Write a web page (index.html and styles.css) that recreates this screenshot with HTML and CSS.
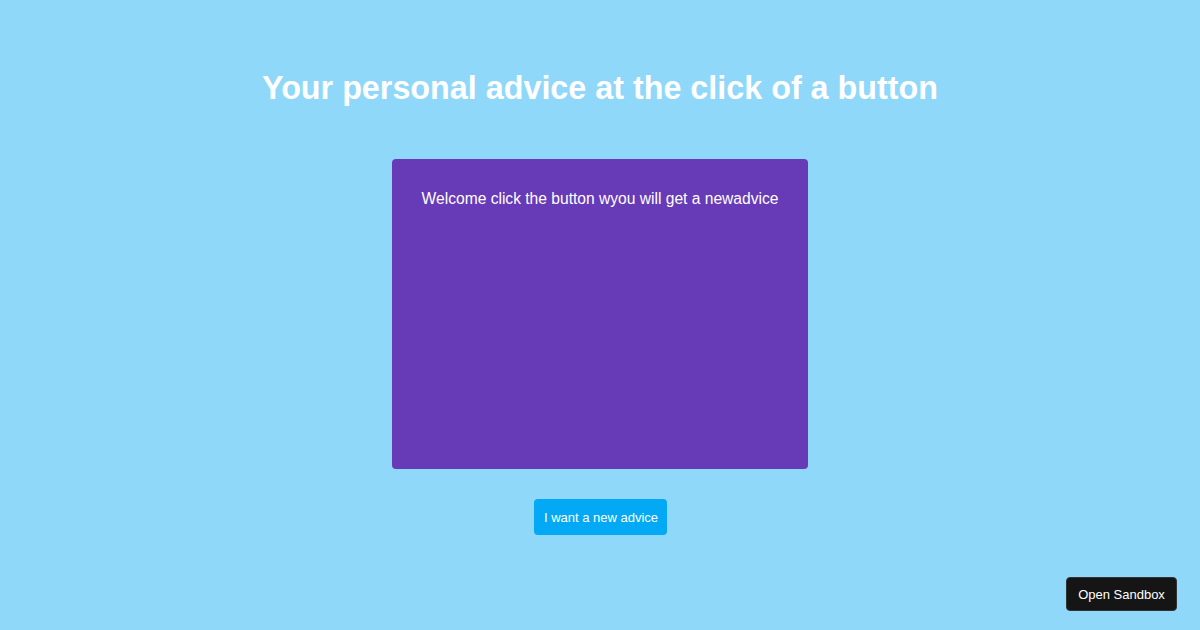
FILE: index.html
```html
<!DOCTYPE html>
<html>
<head>
<meta charset="utf-8">
<link rel="stylesheet" href="styles.css">
</head>
<body>
<main class="app">
  <h1 class="title">Your personal advice at the click of a button</h1>
  <div class="card">
    <p class="advice">Welcome click the button wyou will get a newadvice</p>
  </div>
  <button class="btn">I want a new advice</button>
</main>
<a class="sandbox">Open Sandbox</a>
</body>
</html>
```
FILE: styles.css
```css
html, body {
  margin: 0;
  padding: 0;
  height: 100%;
}
body {
  background: #8fd8f9;
  font-family: "Liberation Sans", Arial, sans-serif;
  color: #fff;
}
.app {
  display: flex;
  flex-direction: column;
  align-items: center;
  padding-top: 68px;
}
.title {
  margin: 0;
  font-size: 32.3px;
  line-height: 40px;
  font-weight: bold;
}
.card {
  margin-top: 51px;
  width: 416px;
  height: 310px;
  box-sizing: border-box;
  background: #673ab7;
  border-radius: 4px;
  padding: 31px 10px;
}
.advice {
  margin: 0;
  text-align: center;
  font-size: 15.6px;
  line-height: 18px;
}
.btn {
  margin-top: 30px;
  width: 133px;
  height: 36px;
  background: #03a9f4;
  color: #fff;
  border: none;
  border-radius: 4px;
  font-family: "Liberation Sans", Arial, sans-serif;
  font-size: 13px;
  padding: 0 0 0 2px;
}
.sandbox {
  position: fixed;
  right: 23px;
  bottom: 19px;
  width: 111px;
  height: 34px;
  box-sizing: border-box;
  display: flex;
  align-items: center;
  justify-content: center;
  background: #151515;
  color: #fff;
  border: 1px solid #333;
  border-radius: 4px;
  font-size: 13px;
}
```
